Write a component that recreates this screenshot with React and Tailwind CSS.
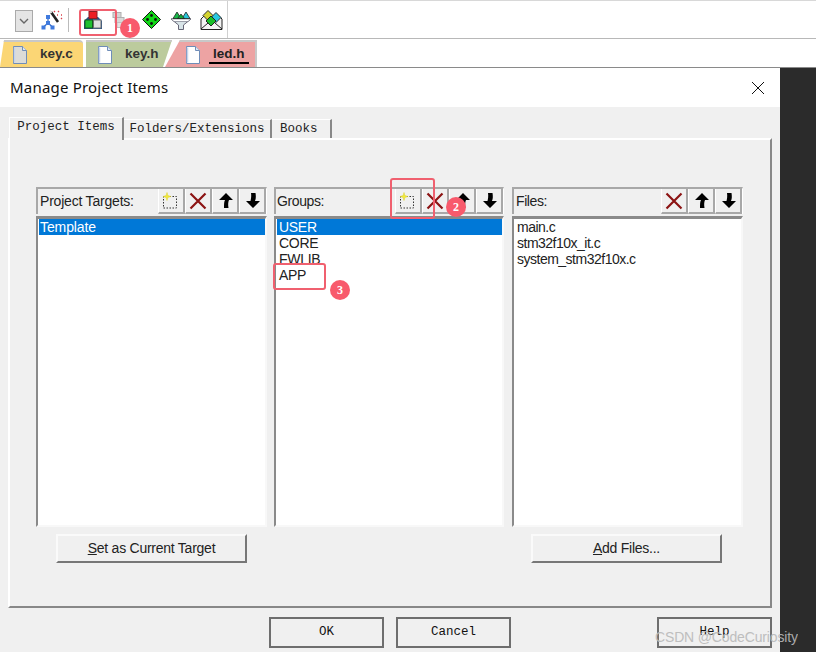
import React from 'react';

const SANS = 'font-["Liberation_Sans",Arial,sans-serif]';
const MONO = 'font-["Liberation_Mono",monospace]';

// Red numbered marker drawn over the screenshot
function Badge({ n, className }) {
  return (
    <div className={`absolute w-[20px] h-[20px] rounded-full bg-[#f85a6c] text-white text-[12px] font-bold flex items-center justify-center font-["Liberation_Serif",serif] ${className}`}>
      {n}
    </div>
  );
}

function Highlight({ className }) {
  return <div className={`absolute border-2 border-[#f0606f] rounded-[3px] ${className}`}></div>;
}

function DocIcon({ shaded }) {
  return (
    <svg width="16" height="20" viewBox="0 0 16 20">
      <path d="M1.5 1.5H10.5L14.5 5.5V18.5H1.5Z" fill={shaded ? '#dcdcd8' : '#ffffff'} stroke="#6f8db8" strokeWidth="1" />
      <path d="M10.5 1.5V5.5H14.5" fill="#dfe8f4" stroke="#6f8db8" strokeWidth="1" />
      <path d="M2.5 2.5V17.5" stroke="#c5d4ea" strokeWidth="1.5" />
    </svg>
  );
}

function NewIcon() {
  return (
    <svg className="-ml-[2px]" width="18" height="18" viewBox="0 0 18 18">
      <rect x="2.5" y="4.5" width="13" height="11.5" fill="none" stroke="#333" strokeWidth="1" strokeDasharray="1.5 1.5" />
      <path d="M6 0.5L6.9 3.6L10 4.5L6.9 5.4L6 8.5L5.1 5.4L2 4.5L5.1 3.6Z" fill="#f3ea3c" stroke="#dcd22e" strokeWidth="0.5" />
    </svg>
  );
}

function DeleteIcon() {
  return (
    <svg className="-ml-[1px]" width="18" height="18" viewBox="0 0 18 18">
      <path d="M1.5 1.5L16.5 16.5M16.5 1.5L1.5 16.5" stroke="#8c1414" strokeWidth="2.2" />
    </svg>
  );
}

function UpIcon() {
  return (
    <svg className="ml-[1px]" width="14" height="15" viewBox="0 0 14 15">
      <path d="M7 0L14 7H10C9 9 9 12 9.5 15H5C5 11 5 9 6 7H0Z" fill="#000" />
    </svg>
  );
}

function DownIcon() {
  return (
    <svg className="ml-[1px]" width="14" height="15" viewBox="0 0 14 15">
      <path d="M7 15L0 8H4.5C5 6 5.5 3 5 0H9.5C10 3 10 6 9 8H14Z" fill="#000" />
    </svg>
  );
}

function ToolButton({ children }) {
  return (
    <div className="w-[27px] h-[25px] flex items-center justify-center bg-[#f0f0f0] border-r-2 border-b-2 border-r-[#a8a8a8] border-b-[#a8a8a8] border-l border-l-white">
      {children}
    </div>
  );
}

function ListColumn({ label, labelClass, showNew, items, width, selected, listClass }) {
  return (
    <div className={`flex flex-col ${width}`}>
      <div className="h-[27px] flex items-center justify-between border-t-2 border-l-2 border-t-[#a8a8a8] border-l-[#a8a8a8] border-r border-r-white">
        <span className={`text-[14px] text-[#222] ${labelClass}`}>{label}</span>
        <div className="flex">
          {showNew && <ToolButton><NewIcon /></ToolButton>}
          <ToolButton><DeleteIcon /></ToolButton>
          <ToolButton><UpIcon /></ToolButton>
          <ToolButton><DownIcon /></ToolButton>
        </div>
      </div>
      <div className="mt-[2px] h-[311px] bg-white border-t-[3px] border-l-2 border-t-[#8a8a8a] border-l-[#8a8a8a] border-r-2 border-b-2 border-r-[#f8f8f8] border-b-[#f8f8f8] pl-[1px] text-[14px] leading-[16px] text-[#222]">
        {items.map((item, i) => (
          <div key={item} className={`${listClass} ${i === 0 && selected ? 'bg-[#0078d7] text-white' : ''}`}>{item}</div>
        ))}
      </div>
    </div>
  );
}

function PanelButton({ children, width }) {
  return (
    <div className={`h-[29px] ${width} flex items-center justify-center bg-[#f0f0f0] border-t-2 border-l-2 border-t-[#fafafa] border-l-[#fafafa] border-r-2 border-b-2 border-r-[#777] border-b-[#777] text-[14px] text-[#222] tracking-[-0.25px]`}>
      {children}
    </div>
  );
}

function DialogButton({ children, width }) {
  return (
    <div className={`h-[31px] ${width} flex items-center justify-center pb-[1px] bg-[#f0f0f0] border-2 border-[#6e6e6e] text-[12.5px] text-[#111] ${MONO}`}>
      {children}
    </div>
  );
}

function Toolbar() {
  return (
    <div className="h-[38px] flex border-t border-t-[#d8d8d8] bg-white">
      <div className="w-[228px] flex items-center pl-[15px] border-r border-r-[#d0d0d0]">
        <div className="w-[18px] h-[22px] mt-[3px] bg-[#e4e4e4] border border-[#aaa] flex items-center justify-center">
          <svg width="10" height="6" viewBox="0 0 10 6"><path d="M1 1L5 5L9 1" fill="none" stroke="#666" strokeWidth="1.4" /></svg>
        </div>
        {/* wizard wand icon */}
        <svg className="ml-[8px]" width="22" height="20" viewBox="0 0 22 20">
          <path d="M7 7V13M7 13L2.5 17M7 13L11.5 17" stroke="#2f66c4" strokeWidth="1.2" fill="none" />
          <rect x="5" y="5" width="4" height="4" fill="#3f7ade" />
          <rect x="5" y="11" width="4" height="4" fill="#3f7ade" />
          <rect x="0.5" y="15.5" width="4" height="4" fill="#3f7ade" />
          <rect x="9.5" y="15.5" width="4" height="4" fill="#3f7ade" />
          <path d="M10 2L17 12" stroke="#222" strokeWidth="2.6" />
          <path d="M8.5 0.5L10.5 3" stroke="#e8e8e8" strokeWidth="2" />
          <path d="M13 2L14 1M17 2L18 1M20 5L21 5M16 5L17 5M20 8L21 9" stroke="#d8404a" strokeWidth="1.3" />
        </svg>
        <div className="ml-[5px] w-[1px] h-[24px] bg-[#bbb]"></div>
        {/* components icon */}
        <svg className="ml-[15px]" width="18" height="18" viewBox="0 0 18 18">
          <path d="M4 6H14L18 10V18H0V10Z" fill="#20508c" />
          <rect x="5" y="0.5" width="8" height="7" fill="#ec1c24" stroke="#8c1c24" />
          <rect x="1" y="9" width="7.5" height="8" fill="#20c030" stroke="#14581e" />
          <rect x="9.5" y="9" width="7.5" height="8" fill="#e0e0e0" stroke="#707070" />
        </svg>
        {/* greyed out books icon */}
        <svg className="ml-[10px]" width="14" height="16" viewBox="0 0 14 16">
          <rect x="1" y="0.5" width="8" height="5" fill="#d4d4d4" stroke="#b0b0b0" />
          <rect x="3" y="5.5" width="9" height="5" fill="#d8d8d8" stroke="#b0b0b0" />
          <rect x="5" y="10.5" width="8" height="5" fill="#e4e4e4" stroke="#c0c0c0" />
        </svg>
        {/* pack icon */}
        <svg className="ml-[16px]" width="19" height="19" viewBox="0 0 19 19">
          <path d="M9.5 0.5L18.5 9.5L9.5 18.5L0.5 9.5Z" fill="#12d818" stroke="#111" />
          <circle cx="9.5" cy="5.5" r="1.4" fill="#111" /><circle cx="9.5" cy="13.5" r="1.4" fill="#111" />
          <circle cx="5.5" cy="9.5" r="1.4" fill="#111" /><circle cx="13.5" cy="9.5" r="1.4" fill="#111" />
        </svg>
        {/* filter icon */}
        <svg className="ml-[9px]" width="22" height="20" viewBox="0 0 22 20">
          <path d="M1 9H21L13.5 15V19.5H8.5V15Z" fill="#d8e4e8" stroke="#667" />
          <path d="M1 9H21L18 11.5H4Z" fill="#ffffff" stroke="#667" strokeWidth="0.6" />
          <path d="M3 8.5L7 2L11 8.5Z" fill="#18b848" stroke="#222" strokeWidth="0.8" />
          <path d="M12 8.5L16 2L20 8.5Z" fill="#28c4d8" stroke="#222" strokeWidth="0.8" />
          <path d="M7.5 8.5L11 4L14.5 8.5Z" fill="#12a838" stroke="#222" strokeWidth="0.8" />
        </svg>
        {/* multi project icon */}
        <svg className="ml-[8px]" width="23" height="20" viewBox="0 0 23 20">
          <path d="M1 9L4 6H19L22 9V19.5H1Z" fill="#f4f4f4" stroke="#222" />
          <path d="M1 19L8 13M22 19L15 13" stroke="#222" strokeWidth="1" />
          <path d="M8 0.5L13 5.5L8 10.5L3 5.5Z" fill="#d4d430" stroke="#333" />
          <path d="M16 2.5L21 7.5L16 12.5L11 7.5Z" fill="#28c8e0" stroke="#333" />
          <path d="M11 6L16 11L11 16L6 11Z" fill="#18c028" stroke="#222" />
        </svg>
      </div>
      <div className="flex-1"></div>
    </div>
  );
}

function FileTabs() {
  return (
    <div className="h-[30px] flex items-end border-t border-t-[#b8b8b8] border-b border-b-[#8a8a8a] bg-white">
      <div className="h-[27px] w-[83px] flex items-center gap-[12px] pl-[12px] bg-[#fbd675] rounded-tr-[4px] border-t-2 border-t-[#c8c8c8] [clip-path:polygon(4px_0,100%_0,100%_100%,0_100%)]">
        <DocIcon shaded />
        <span className="text-[13.5px] font-bold text-[#333]">key.c</span>
      </div>
      <div className="ml-[3px] h-[27px] w-[87px] flex items-center gap-[12px] pl-[11px] bg-[#bccb9d] border-t-2 border-t-[#c8c8c8] [clip-path:polygon(0_0,86px_0,77px_100%,0_100%)]">
        <DocIcon />
        <span className="text-[13.5px] font-bold text-[#333]">key.h</span>
      </div>
      <div className="-ml-[8px] h-[27px] w-[92px] flex items-center gap-[8px] pl-[20px] bg-[#eda3a3] border-t-2 border-t-[#c8c8c8] border-r-2 border-r-[#c8c8c8] [clip-path:polygon(15px_0,100%_0,100%_100%,0_100%)]">
        <DocIcon />
        <span className="px-[4px] text-[13.5px] leading-[17px] font-bold text-[#222] border-b-2 border-b-black">led.h</span>
      </div>
    </div>
  );
}

export default function App() {
  return (
    <div className={`relative w-[816px] h-[652px] overflow-hidden bg-white ${SANS}`}>
      <Toolbar />
      <FileTabs />

      <div className="flex h-[584px]">
        <div className="w-[780px] flex flex-col">
          {/* title bar */}
          <div className="h-[39px] bg-white flex items-center justify-between pl-[10px] pr-[15px]">
            <span className="text-[15px] tracking-[0.2px] text-[#111] font-['Noto_Sans',sans-serif]">Manage Project Items</span>
            <svg width="14" height="14" viewBox="0 0 14 14"><path d="M1 1L13 13M13 1L1 13" stroke="#111" strokeWidth="1" /></svg>
          </div>

          <div className="flex-1 bg-[#f0f0f0] px-[8px] pt-[8px] flex flex-col">
            {/* property tabs */}
            <div className={`h-[23px] flex items-end pl-[1px] text-[12.5px] text-[#222] ${MONO}`}>
              <div className="h-[23px] w-[115px] pb-[4px] flex items-center justify-center border-t border-l border-white border-r-2 border-r-[#888] bg-[#f0f0f0] relative z-10 -mb-[2px]">Project Items</div>
              <div className="h-[19px] w-[148px] flex items-center justify-center border-r-2 border-r-[#888] border-t border-t-white">Folders/Extensions</div>
              <div className="h-[19px] w-[60px] pl-[8px] flex items-center border-r-2 border-r-[#888] border-t border-t-white">Books</div>
            </div>

            {/* panel */}
            <div className="h-[470px] border-t-2 border-l-2 border-white border-r-2 border-b-2 border-r-[#888] border-b-[#888] pl-[26px] pt-[47px]">
              <div className="flex">
                <ListColumn label="Project Targets:" labelClass="pl-[2px] tracking-[-0.2px]" showNew items={['Template']} width="w-[231px]" selected listClass="pl-[1px] tracking-[-0.1px]" />
                <div className="ml-[7px]">
                  <ListColumn label="Groups:" labelClass="pl-[1px] tracking-[-0.4px]" showNew items={['USER', 'CORE', 'FWLIB', 'APP']} width="w-[230px]" selected listClass="pl-[2px] tracking-[-0.3px]" />
                </div>
                <div className="ml-[8px]">
                  <ListColumn label="Files:" labelClass="pl-[2px] tracking-[-0.4px]" items={['main.c', 'stm32f10x_it.c', 'system_stm32f10x.c']} width="w-[231px]" listClass="pl-[2px] tracking-[-0.5px]" />
                </div>
              </div>
              <div className="flex mt-[7px] pl-[20px]">
                <PanelButton width="w-[191px]"><span><u>S</u>et as Current Target</span></PanelButton>
                <div className="ml-[284px]">
                  <PanelButton width="w-[191px]"><span><u>A</u>dd Files...</span></PanelButton>
                </div>
              </div>
            </div>

            {/* dialog buttons */}
            <div className="flex mt-[9px] pl-[261px]">
              <DialogButton width="w-[115px]">OK</DialogButton>
              <div className="ml-[12px]"><DialogButton width="w-[115px]">Cancel</DialogButton></div>
              <div className="ml-[146px]"><DialogButton width="w-[115px]">Help</DialogButton></div>
            </div>
          </div>
        </div>
        <div className="w-[36px] bg-[#2b2b2b]"></div>
      </div>

      {/* annotations on top of the screenshot */}
      <Highlight className="left-[79px] top-[9px] w-[38px] h-[27px]" />
      <Badge n="1" className="left-[120px] top-[18px]" />
      <Highlight className="left-[390px] top-[178px] w-[45px] h-[41px]" />
      <Badge n="2" className="left-[446px] top-[197px]" />
      <Highlight className="left-[273px] top-[263px] w-[53px] h-[27px]" />
      <Badge n="3" className="left-[330px] top-[280px]" />

      <div className="absolute left-[655px] top-[627px] text-[14px] tracking-[-0.15px] text-[#b9b9b9] opacity-90">CSDN @CodeCuriosity</div>
    </div>
  );
}
